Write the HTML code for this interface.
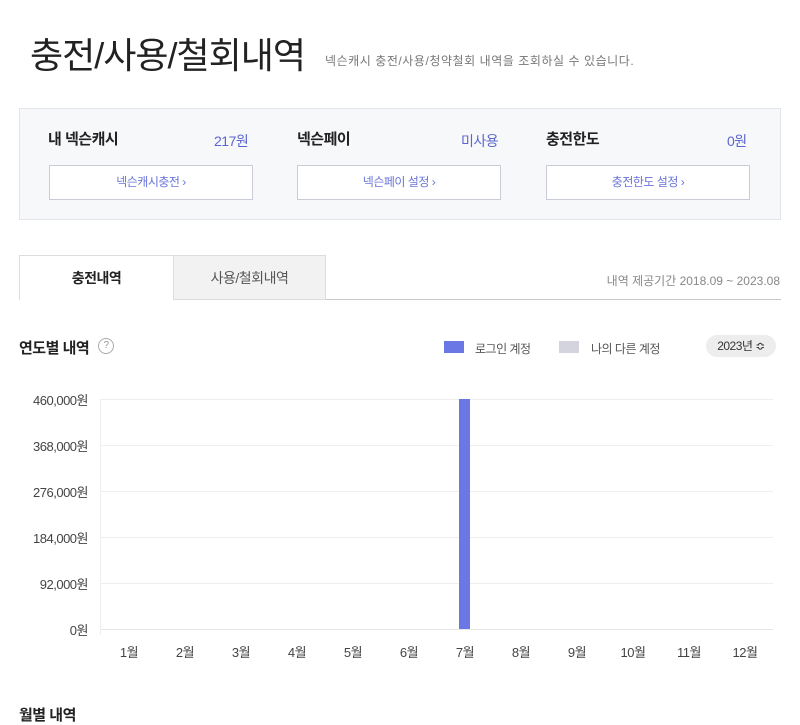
<!DOCTYPE html>
<html><head><meta charset="utf-8"><style>
*{margin:0;padding:0;box-sizing:border-box}
body{width:800px;height:710px;background:#fff;font-family:"Liberation Sans","Noto Sans CJK KR",sans-serif;color:#222;position:relative;overflow:hidden;letter-spacing:-0.5px}
.a{position:absolute;white-space:nowrap}
.box{position:absolute;left:19px;top:108px;width:762px;height:112px;background:#f7f8fa;border:1px solid #e3e5ea}
.btn{position:absolute;top:165px;width:204px;height:35px;background:#fff;border:1px solid #c9ccd6;color:#6a74d8;font-size:12px;text-align:center;line-height:33px}
.lbl{font-size:15px;font-weight:bold;top:128px;color:#222}
.val{font-size:14px;color:#5b66d0;top:131px}
.yl{font-size:13px;color:#444;text-align:right;width:80px;left:8px}
.grid{position:absolute;left:100px;width:673px;height:1px;background:#eee}
.mo{position:absolute;top:642px;font-size:13px;color:#444;width:56px;text-align:center}
</style></head><body>
<div class="a" style="left:30px;top:27px;font-size:36px;color:#222;letter-spacing:-1px">충전/사용/철회내역</div>
<div class="a" style="left:325px;top:52px;font-size:12px;color:#777;letter-spacing:0.55px">넥슨캐시 충전/사용/청약철회 내역을 조회하실 수 있습니다.</div>
<div class="box"></div>
<div class="a lbl" style="left:48px">내 넥슨캐시</div>
<div class="a val" style="left:214px">217원</div>
<div class="a lbl" style="left:297px">넥슨페이</div>
<div class="a val" style="left:461px">미사용</div>
<div class="a lbl" style="left:546px">충전한도</div>
<div class="a val" style="left:727px">0원</div>
<div class="btn" style="left:49px">넥슨캐시충전 ›</div>
<div class="btn" style="left:297px">넥슨페이 설정 ›</div>
<div class="btn" style="left:546px">충전한도 설정 ›</div>
<div style="position:absolute;left:19px;top:299px;width:762px;height:1px;background:#c8c8c8"></div>
<div style="position:absolute;left:19px;top:255px;width:155px;height:45px;background:#fff;border:1px solid #ddd;border-bottom:none;text-align:center;line-height:44px;font-size:14px;font-weight:bold">충전내역</div>
<div style="position:absolute;left:173px;top:255px;width:153px;height:45px;background:#f2f2f2;border:1px solid #ddd;text-align:center;line-height:44px;font-size:14px;color:#555">사용/철회내역</div>
<div class="a" style="right:20px;top:272px;font-size:12px;color:#888;letter-spacing:0">내역 제공기간 2018.09 ~ 2023.08</div>
<div class="a" style="left:19px;top:337px;font-size:15px;font-weight:bold">연도별 내역</div>
<div class="a" style="left:98px;top:338px;width:16px;height:16px;border:1px solid #aaa;border-radius:50%;font-size:10px;color:#999;text-align:center;line-height:14px">?</div>
<div class="a" style="left:444px;top:341px;width:20px;height:12px;background:#6b77e5"></div>
<div class="a" style="left:475px;top:340px;font-size:12px;color:#555">로그인 계정</div>
<div class="a" style="left:559px;top:341px;width:20px;height:12px;background:#d3d4de"></div>
<div class="a" style="left:591px;top:340px;font-size:12px;color:#555">나의 다른 계정</div>
<div class="a" style="left:706px;top:335px;width:70px;height:22px;background:#ededed;border-radius:11px;font-size:12px;color:#333;text-align:center;line-height:22px">2023년 ≎</div>
<div class="grid" style="top:399px"></div>
<div class="grid" style="top:445px"></div>
<div class="grid" style="top:491px"></div>
<div class="grid" style="top:537px"></div>
<div class="grid" style="top:583px"></div>
<div class="grid" style="top:629px;background:#e6e6e6"></div>
<div style="position:absolute;left:100px;top:399px;width:1px;height:236px;background:#eee"></div>
<div class="a yl" style="top:390px">460,000원</div>
<div class="a yl" style="top:436px">368,000원</div>
<div class="a yl" style="top:482px">276,000원</div>
<div class="a yl" style="top:528px">184,000원</div>
<div class="a yl" style="top:574px">92,000원</div>
<div class="a yl" style="top:620px">0원</div>
<div class="a" style="left:459px;top:399px;width:11px;height:230px;background:#6b77e5"></div>
<div class="mo" style="left:101px">1월</div><div class="mo" style="left:157px">2월</div><div class="mo" style="left:213px">3월</div><div class="mo" style="left:269px">4월</div><div class="mo" style="left:325px">5월</div><div class="mo" style="left:381px">6월</div><div class="mo" style="left:437px">7월</div><div class="mo" style="left:493px">8월</div><div class="mo" style="left:549px">9월</div><div class="mo" style="left:605px">10월</div><div class="mo" style="left:661px">11월</div><div class="mo" style="left:717px">12월</div>
<div class="a" style="left:19px;top:704px;font-size:15px;font-weight:bold">월별 내역</div>
</body></html>
